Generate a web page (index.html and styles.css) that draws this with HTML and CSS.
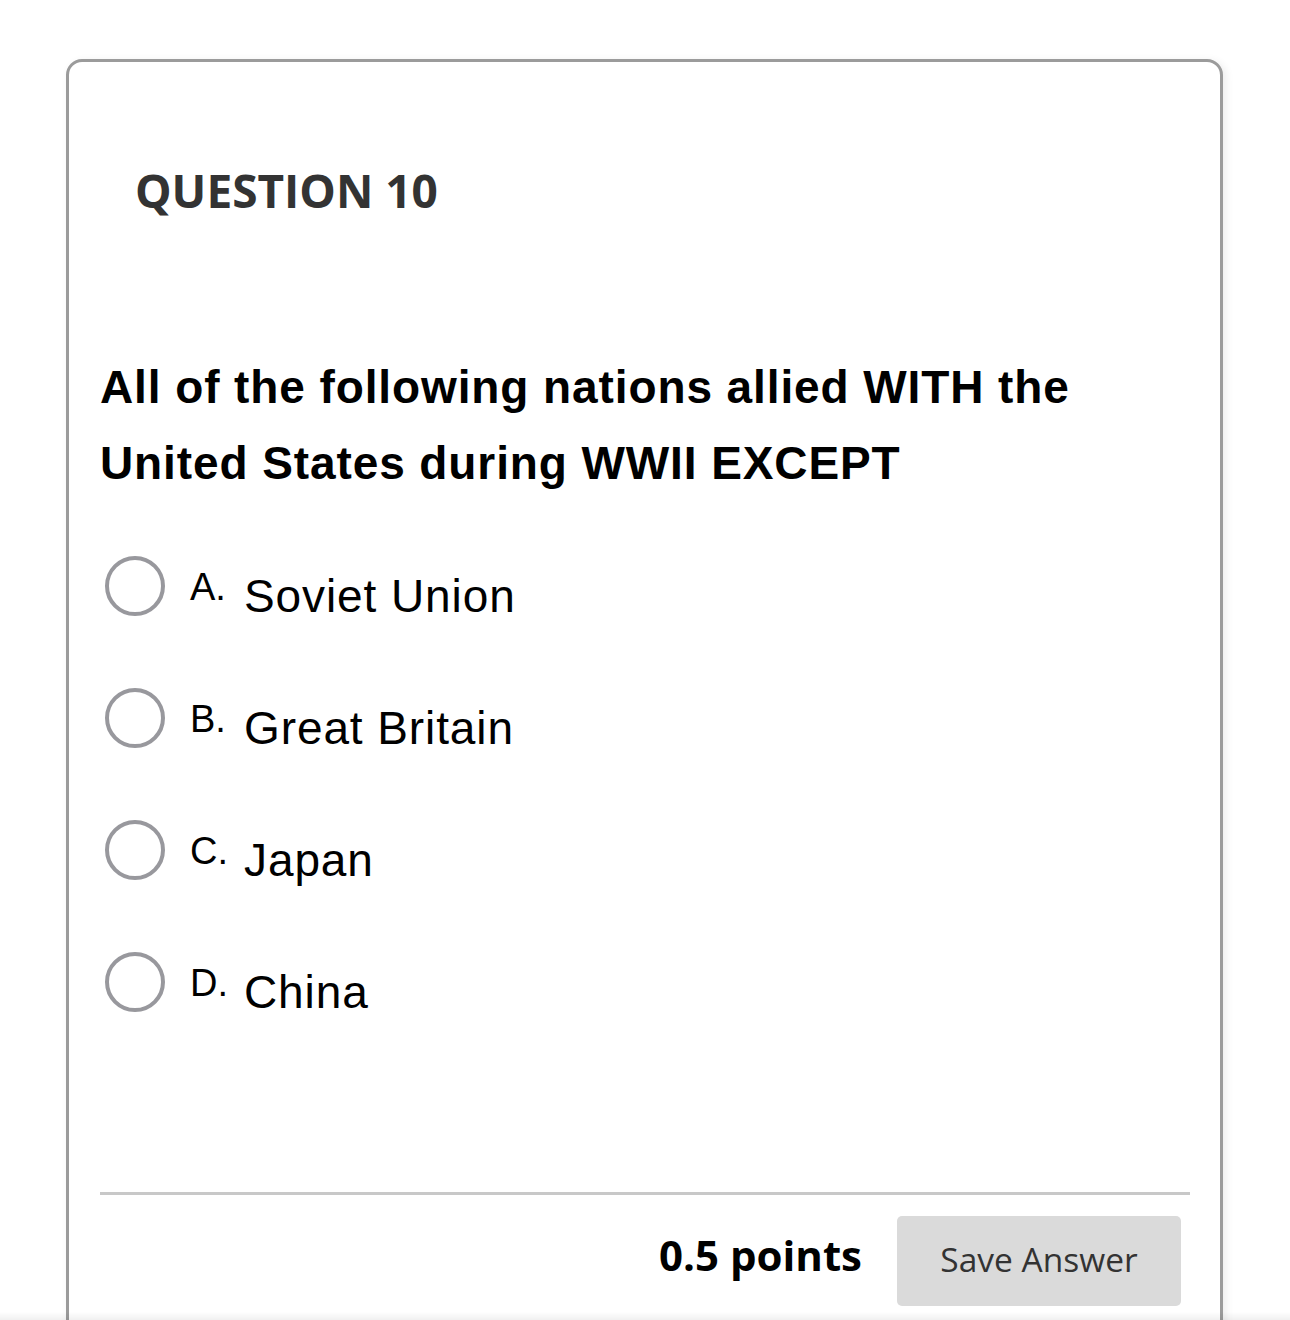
FILE: index.html
```html
<!DOCTYPE html>
<html lang="en">
<head>
<meta charset="utf-8">
<title>Question 10</title>
<link rel="stylesheet" href="styles.css">
</head>
<body>
<div class="card">
  <h2 class="q-title">QUESTION 10</h2>
  <p class="q-text">All of the following nations allied WITH the United States during WWII EXCEPT</p>
  <div class="options">
    <label class="option"><span class="radio"></span><span class="opt-text"><span class="opt-letter">A.</span>Soviet Union</span></label>
    <label class="option"><span class="radio"></span><span class="opt-text"><span class="opt-letter">B.</span>Great Britain</span></label>
    <label class="option"><span class="radio"></span><span class="opt-text"><span class="opt-letter">C.</span>Japan</span></label>
    <label class="option"><span class="radio"></span><span class="opt-text"><span class="opt-letter">D.</span>China</span></label>
  </div>
  <div class="footer">
    <span class="points">0.5 points</span>
    <button class="save-btn" type="button">Save Answer</button>
  </div>
</div>
<div class="bottom-shade"></div>
</body>
</html>
```

FILE: styles.css
```css
html, body {
  margin: 0;
  padding: 0;
  background: #ffffff;
  overflow: hidden;
}

body {
  height: 1320px;
}

.card {
  box-sizing: border-box;
  margin: 59px 0 0 66px;
  width: 1157px;
  height: 1400px;
  border: 3px solid #9b9b9b;
  border-radius: 16px;
  padding: 100px 30px 0 31px;
  box-shadow: 3px 2px 8px rgba(0, 0, 0, 0.08);
  background: #fff;
}

.q-title {
  margin: 0 0 131px 35px;
  font-family: "Open Sans", sans-serif;
  font-weight: 700;
  font-size: 46px;
  line-height: 56px;
  color: #333333;
  letter-spacing: 0;
}

.q-text {
  margin: 0 0 39px 0;
  font-family: "Liberation Sans", Arial, sans-serif;
  font-weight: 700;
  font-size: 46px;
  line-height: 76px;
  letter-spacing: 0.9px;
  color: #000000;
}

.options {
  display: flex;
  flex-direction: column;
}

.option {
  display: flex;
  align-items: flex-start;
  height: 132px;
}

.radio {
  box-sizing: border-box;
  flex: none;
  width: 60px;
  height: 60px;
  margin: 16px 0 0 5px;
  border: 4px solid #98989d;
  border-radius: 50%;
}

.opt-text {
  margin: 26px 0 0 25px;
  font-family: "Liberation Sans", Arial, sans-serif;
  font-size: 46px;
  line-height: 60px;
  letter-spacing: 0.9px;
  color: #000000;
}

.opt-letter {
  display: inline-block;
  width: 54px;
  font-size: 38px;
  line-height: 1;
  letter-spacing: 0;
  vertical-align: 12px;
}

.footer {
  margin-top: 124px;
  border-top: 3px solid #c8c8c8;
  padding-top: 21px;
  display: flex;
  justify-content: flex-end;
  align-items: flex-start;
}

.points {
  font-family: "Open Sans", sans-serif;
  font-weight: 700;
  font-size: 42px;
  line-height: 78px;
  color: #000000;
  margin-right: 35px;
}

.save-btn {
  box-sizing: border-box;
  width: 284px;
  height: 90px;
  margin-right: 9px;
  border: none;
  border-radius: 5px;
  background: #dadada;
  font-family: "Open Sans", sans-serif;
  font-size: 33.5px;
  color: #333333;
  padding: 0 0 5px 0;
}

.bottom-shade {
  position: fixed;
  left: 0;
  right: 0;
  bottom: 0;
  height: 8px;
  background: linear-gradient(to bottom, rgba(0, 0, 0, 0), rgba(0, 0, 0, 0.06));
}
```
